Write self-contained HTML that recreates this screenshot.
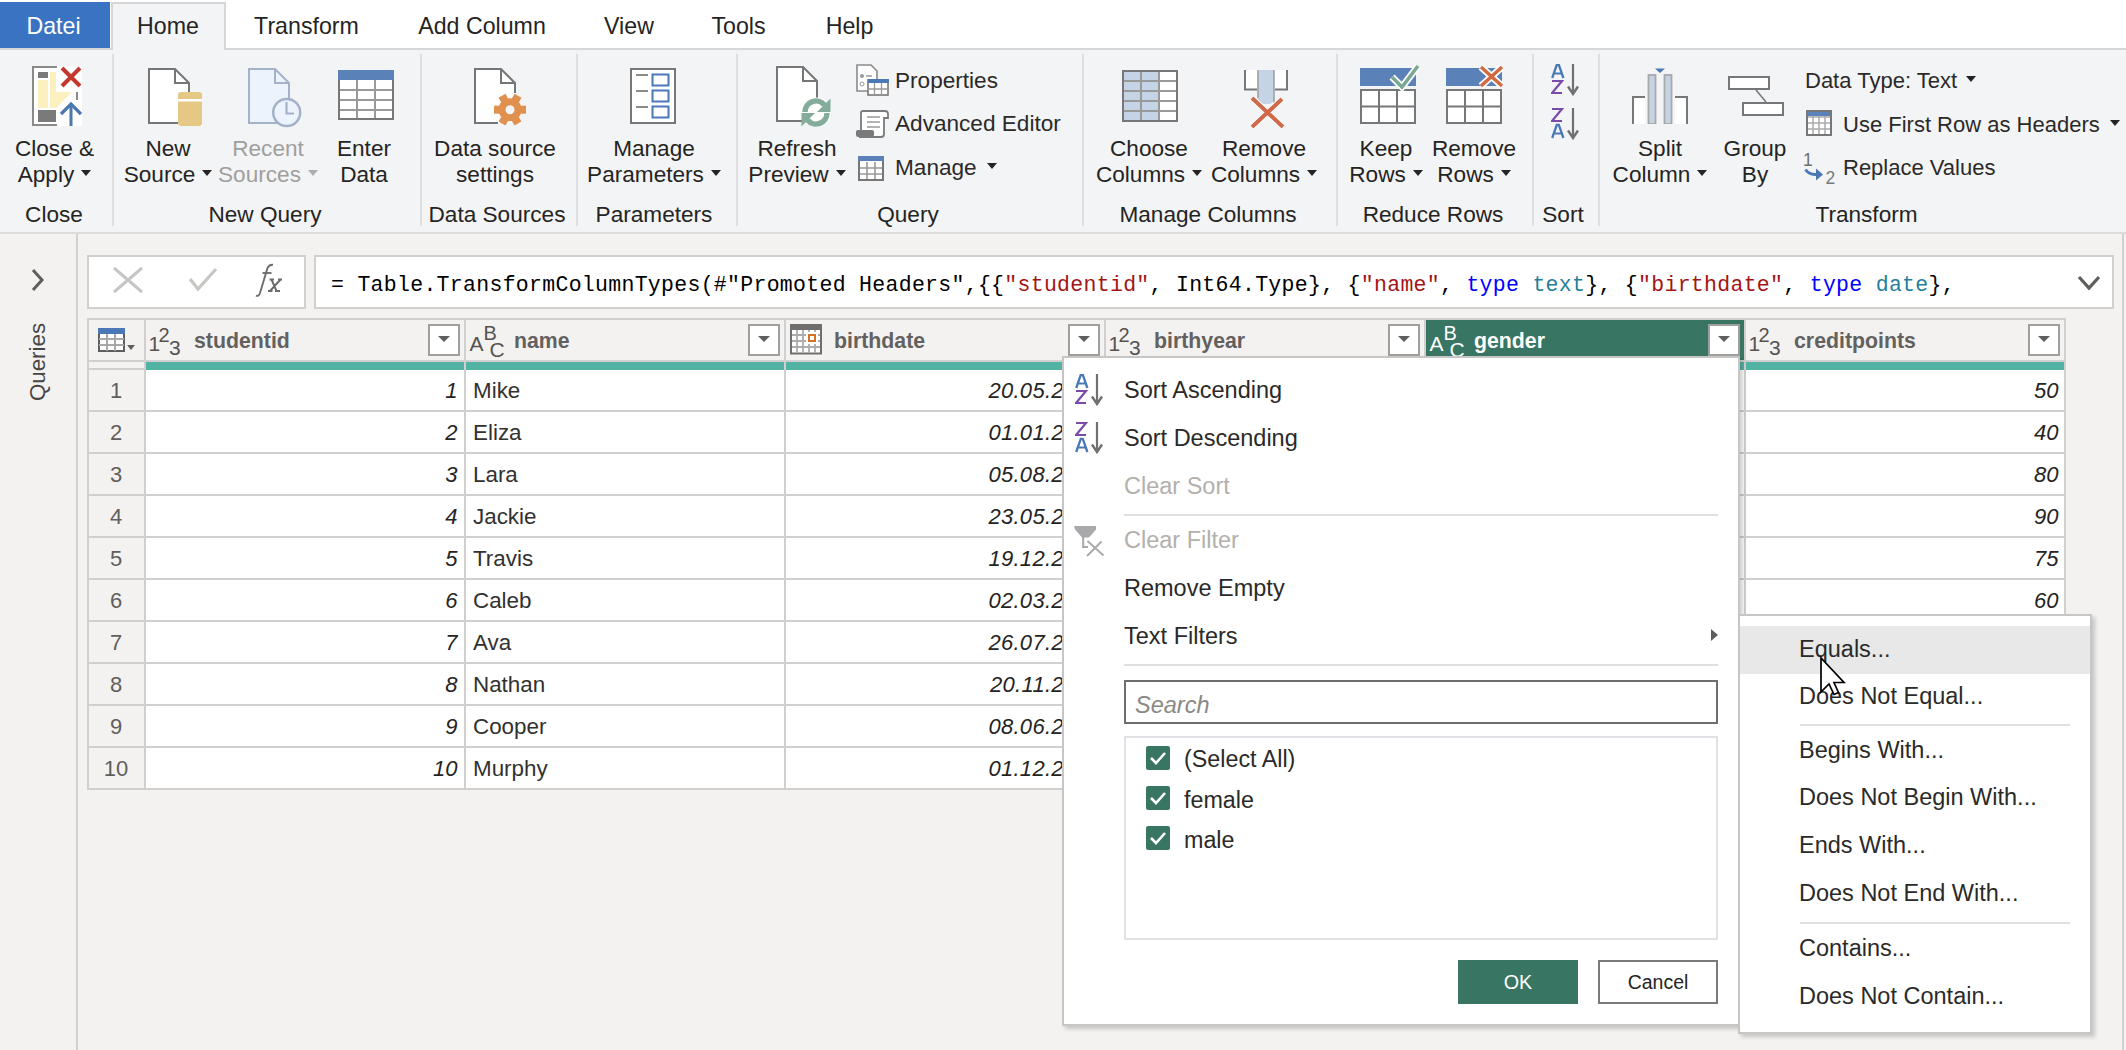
<!DOCTYPE html><html><head><meta charset="utf-8"><style>
html,body{margin:0;padding:0;width:2126px;height:1050px;overflow:hidden;background:#f3f2f1}
body{position:relative;font-family:"Liberation Sans",sans-serif}
.t{position:absolute;white-space:nowrap;line-height:0;height:0}
.r{position:absolute;display:block}
.s{color:#a31515}.k{color:#0000ff}.y{color:#267f99}
</style></head><body>
<div class="r" style="left:0px;top:0px;width:2126px;height:1050px;background:#f3f2f1;"></div>
<div class="r" style="left:0px;top:0px;width:2126px;height:48px;background:#ffffff;"></div>
<div class="r" style="left:0px;top:48px;width:2126px;height:184px;background:#f3f4f6;"></div>
<div class="r" style="left:0px;top:48px;width:2126px;height:2px;background:#d6d6d6;"></div>
<div class="r" style="left:0px;top:232px;width:2126px;height:2px;background:#dcdcdc;"></div>
<div class="r" style="left:0px;top:2px;width:110px;height:46px;background:#3b73c3;"></div>
<div class="t" style="left:-446.5px;width:1000px;text-align:center;top:26.26px;font-size:23.2px;color:#ffffff;font-weight:normal;font-style:normal;font-family:'Liberation Sans', sans-serif;">Datei</div>
<div class="r" style="left:111px;top:2px;width:115px;height:48px;background:#f3f4f6;border:2px solid #d6d6d6;border-bottom:none;box-sizing:border-box"></div>
<div class="t" style="left:-332px;width:1000px;text-align:center;top:26.26px;font-size:23.2px;color:#252423;font-weight:normal;font-style:normal;font-family:'Liberation Sans', sans-serif;">Home</div>
<div class="t" style="left:-193.5px;width:1000px;text-align:center;top:26.26px;font-size:23.2px;color:#252423;font-weight:normal;font-style:normal;font-family:'Liberation Sans', sans-serif;">Transform</div>
<div class="t" style="left:-18px;width:1000px;text-align:center;top:26.26px;font-size:23.2px;color:#252423;font-weight:normal;font-style:normal;font-family:'Liberation Sans', sans-serif;">Add Column</div>
<div class="t" style="left:129px;width:1000px;text-align:center;top:26.26px;font-size:23.2px;color:#252423;font-weight:normal;font-style:normal;font-family:'Liberation Sans', sans-serif;">View</div>
<div class="t" style="left:238.5px;width:1000px;text-align:center;top:26.26px;font-size:23.2px;color:#252423;font-weight:normal;font-style:normal;font-family:'Liberation Sans', sans-serif;">Tools</div>
<div class="t" style="left:349.5px;width:1000px;text-align:center;top:26.26px;font-size:23.2px;color:#252423;font-weight:normal;font-style:normal;font-family:'Liberation Sans', sans-serif;">Help</div>
<div class="r" style="left:111.6px;top:54px;width:2px;height:172px;background:#dedede;"></div>
<div class="r" style="left:420px;top:54px;width:2px;height:172px;background:#dedede;"></div>
<div class="r" style="left:576px;top:54px;width:2px;height:172px;background:#dedede;"></div>
<div class="r" style="left:736px;top:54px;width:2px;height:172px;background:#dedede;"></div>
<div class="r" style="left:1082px;top:54px;width:2px;height:172px;background:#dedede;"></div>
<div class="r" style="left:1336px;top:54px;width:2px;height:172px;background:#dedede;"></div>
<div class="r" style="left:1532px;top:54px;width:2px;height:172px;background:#dedede;"></div>
<div class="r" style="left:1597.7px;top:54px;width:2px;height:172px;background:#dedede;"></div>
<div class="t" style="left:-445.5px;width:1000px;text-align:center;top:148.97px;font-size:22.6px;color:#252423;font-weight:normal;font-style:normal;font-family:'Liberation Sans', sans-serif;">Close &amp;</div>
<div class="t" style="left:-445.5px;width:1000px;text-align:center;top:174.77px;font-size:22.6px;color:#252423;font-weight:normal;font-style:normal;font-family:'Liberation Sans', sans-serif;">Apply<span style="display:inline-block;width:17px;height:0;vertical-align:baseline;position:relative"><span style="position:absolute;left:7px;top:-11.5px;width:0;height:0;border-left:5px solid transparent;border-right:5px solid transparent;border-top:6px solid #252423"></span></span></div>
<div class="t" style="left:-446px;width:1000px;text-align:center;top:214.97px;font-size:22.6px;color:#252423;font-weight:normal;font-style:normal;font-family:'Liberation Sans', sans-serif;">Close</div>
<div class="t" style="left:-332px;width:1000px;text-align:center;top:148.97px;font-size:22.6px;color:#252423;font-weight:normal;font-style:normal;font-family:'Liberation Sans', sans-serif;">New</div>
<div class="t" style="left:-332px;width:1000px;text-align:center;top:174.77px;font-size:22.6px;color:#252423;font-weight:normal;font-style:normal;font-family:'Liberation Sans', sans-serif;">Source<span style="display:inline-block;width:17px;height:0;vertical-align:baseline;position:relative"><span style="position:absolute;left:7px;top:-11.5px;width:0;height:0;border-left:5px solid transparent;border-right:5px solid transparent;border-top:6px solid #252423"></span></span></div>
<div class="t" style="left:-232px;width:1000px;text-align:center;top:148.97px;font-size:22.6px;color:#a19f9d;font-weight:normal;font-style:normal;font-family:'Liberation Sans', sans-serif;">Recent</div>
<div class="t" style="left:-232px;width:1000px;text-align:center;top:174.77px;font-size:22.6px;color:#a19f9d;font-weight:normal;font-style:normal;font-family:'Liberation Sans', sans-serif;">Sources<span style="display:inline-block;width:17px;height:0;vertical-align:baseline;position:relative"><span style="position:absolute;left:7px;top:-11.5px;width:0;height:0;border-left:5px solid transparent;border-right:5px solid transparent;border-top:6px solid #b0aeac"></span></span></div>
<div class="t" style="left:-136px;width:1000px;text-align:center;top:148.97px;font-size:22.6px;color:#252423;font-weight:normal;font-style:normal;font-family:'Liberation Sans', sans-serif;">Enter</div>
<div class="t" style="left:-136px;width:1000px;text-align:center;top:174.77px;font-size:22.6px;color:#252423;font-weight:normal;font-style:normal;font-family:'Liberation Sans', sans-serif;">Data</div>
<div class="t" style="left:-235px;width:1000px;text-align:center;top:214.97px;font-size:22.6px;color:#252423;font-weight:normal;font-style:normal;font-family:'Liberation Sans', sans-serif;">New Query</div>
<div class="t" style="left:-5px;width:1000px;text-align:center;top:148.97px;font-size:22.6px;color:#252423;font-weight:normal;font-style:normal;font-family:'Liberation Sans', sans-serif;">Data source</div>
<div class="t" style="left:-5px;width:1000px;text-align:center;top:174.77px;font-size:22.6px;color:#252423;font-weight:normal;font-style:normal;font-family:'Liberation Sans', sans-serif;">settings</div>
<div class="t" style="left:-3px;width:1000px;text-align:center;top:214.97px;font-size:22.6px;color:#252423;font-weight:normal;font-style:normal;font-family:'Liberation Sans', sans-serif;">Data Sources</div>
<div class="t" style="left:154px;width:1000px;text-align:center;top:148.97px;font-size:22.6px;color:#252423;font-weight:normal;font-style:normal;font-family:'Liberation Sans', sans-serif;">Manage</div>
<div class="t" style="left:154px;width:1000px;text-align:center;top:174.77px;font-size:22.6px;color:#252423;font-weight:normal;font-style:normal;font-family:'Liberation Sans', sans-serif;">Parameters<span style="display:inline-block;width:17px;height:0;vertical-align:baseline;position:relative"><span style="position:absolute;left:7px;top:-11.5px;width:0;height:0;border-left:5px solid transparent;border-right:5px solid transparent;border-top:6px solid #252423"></span></span></div>
<div class="t" style="left:154px;width:1000px;text-align:center;top:214.97px;font-size:22.6px;color:#252423;font-weight:normal;font-style:normal;font-family:'Liberation Sans', sans-serif;">Parameters</div>
<div class="t" style="left:297px;width:1000px;text-align:center;top:148.97px;font-size:22.6px;color:#252423;font-weight:normal;font-style:normal;font-family:'Liberation Sans', sans-serif;">Refresh</div>
<div class="t" style="left:297px;width:1000px;text-align:center;top:174.77px;font-size:22.6px;color:#252423;font-weight:normal;font-style:normal;font-family:'Liberation Sans', sans-serif;">Preview<span style="display:inline-block;width:17px;height:0;vertical-align:baseline;position:relative"><span style="position:absolute;left:7px;top:-11.5px;width:0;height:0;border-left:5px solid transparent;border-right:5px solid transparent;border-top:6px solid #252423"></span></span></div>
<div class="t" style="left:895px;top:80.97px;font-size:22.6px;color:#2b2a29;font-weight:normal;font-style:normal;font-family:'Liberation Sans', sans-serif;">Properties</div>
<div class="t" style="left:895px;top:124.47px;font-size:22.6px;color:#2b2a29;font-weight:normal;font-style:normal;font-family:'Liberation Sans', sans-serif;">Advanced Editor</div>
<div class="t" style="left:895px;top:167.97px;font-size:22.6px;color:#2b2a29;font-weight:normal;font-style:normal;font-family:'Liberation Sans', sans-serif;">Manage<span style="display:inline-block;width:17px;height:0;vertical-align:baseline;position:relative"><span style="position:absolute;left:10px;top:-11.5px;width:0;height:0;border-left:5px solid transparent;border-right:5px solid transparent;border-top:6px solid #252423"></span></span></div>
<div class="t" style="left:408px;width:1000px;text-align:center;top:214.97px;font-size:22.6px;color:#252423;font-weight:normal;font-style:normal;font-family:'Liberation Sans', sans-serif;">Query</div>
<div class="t" style="left:649px;width:1000px;text-align:center;top:148.97px;font-size:22.6px;color:#252423;font-weight:normal;font-style:normal;font-family:'Liberation Sans', sans-serif;">Choose</div>
<div class="t" style="left:649px;width:1000px;text-align:center;top:174.77px;font-size:22.6px;color:#252423;font-weight:normal;font-style:normal;font-family:'Liberation Sans', sans-serif;">Columns<span style="display:inline-block;width:17px;height:0;vertical-align:baseline;position:relative"><span style="position:absolute;left:7px;top:-11.5px;width:0;height:0;border-left:5px solid transparent;border-right:5px solid transparent;border-top:6px solid #252423"></span></span></div>
<div class="t" style="left:764px;width:1000px;text-align:center;top:148.97px;font-size:22.6px;color:#252423;font-weight:normal;font-style:normal;font-family:'Liberation Sans', sans-serif;">Remove</div>
<div class="t" style="left:764px;width:1000px;text-align:center;top:174.77px;font-size:22.6px;color:#252423;font-weight:normal;font-style:normal;font-family:'Liberation Sans', sans-serif;">Columns<span style="display:inline-block;width:17px;height:0;vertical-align:baseline;position:relative"><span style="position:absolute;left:7px;top:-11.5px;width:0;height:0;border-left:5px solid transparent;border-right:5px solid transparent;border-top:6px solid #252423"></span></span></div>
<div class="t" style="left:708px;width:1000px;text-align:center;top:214.97px;font-size:22.6px;color:#252423;font-weight:normal;font-style:normal;font-family:'Liberation Sans', sans-serif;">Manage Columns</div>
<div class="t" style="left:886px;width:1000px;text-align:center;top:148.97px;font-size:22.6px;color:#252423;font-weight:normal;font-style:normal;font-family:'Liberation Sans', sans-serif;">Keep</div>
<div class="t" style="left:886px;width:1000px;text-align:center;top:174.77px;font-size:22.6px;color:#252423;font-weight:normal;font-style:normal;font-family:'Liberation Sans', sans-serif;">Rows<span style="display:inline-block;width:17px;height:0;vertical-align:baseline;position:relative"><span style="position:absolute;left:7px;top:-11.5px;width:0;height:0;border-left:5px solid transparent;border-right:5px solid transparent;border-top:6px solid #252423"></span></span></div>
<div class="t" style="left:974px;width:1000px;text-align:center;top:148.97px;font-size:22.6px;color:#252423;font-weight:normal;font-style:normal;font-family:'Liberation Sans', sans-serif;">Remove</div>
<div class="t" style="left:974px;width:1000px;text-align:center;top:174.77px;font-size:22.6px;color:#252423;font-weight:normal;font-style:normal;font-family:'Liberation Sans', sans-serif;">Rows<span style="display:inline-block;width:17px;height:0;vertical-align:baseline;position:relative"><span style="position:absolute;left:7px;top:-11.5px;width:0;height:0;border-left:5px solid transparent;border-right:5px solid transparent;border-top:6px solid #252423"></span></span></div>
<div class="t" style="left:933px;width:1000px;text-align:center;top:214.97px;font-size:22.6px;color:#252423;font-weight:normal;font-style:normal;font-family:'Liberation Sans', sans-serif;">Reduce Rows</div>
<div class="t" style="left:1063px;width:1000px;text-align:center;top:214.97px;font-size:22.6px;color:#252423;font-weight:normal;font-style:normal;font-family:'Liberation Sans', sans-serif;">Sort</div>
<div class="t" style="left:1160px;width:1000px;text-align:center;top:148.97px;font-size:22.6px;color:#252423;font-weight:normal;font-style:normal;font-family:'Liberation Sans', sans-serif;">Split</div>
<div class="t" style="left:1160px;width:1000px;text-align:center;top:174.77px;font-size:22.6px;color:#252423;font-weight:normal;font-style:normal;font-family:'Liberation Sans', sans-serif;">Column<span style="display:inline-block;width:17px;height:0;vertical-align:baseline;position:relative"><span style="position:absolute;left:7px;top:-11.5px;width:0;height:0;border-left:5px solid transparent;border-right:5px solid transparent;border-top:6px solid #252423"></span></span></div>
<div class="t" style="left:1255px;width:1000px;text-align:center;top:148.97px;font-size:22.6px;color:#252423;font-weight:normal;font-style:normal;font-family:'Liberation Sans', sans-serif;">Group</div>
<div class="t" style="left:1255px;width:1000px;text-align:center;top:174.77px;font-size:22.6px;color:#252423;font-weight:normal;font-style:normal;font-family:'Liberation Sans', sans-serif;">By</div>
<div class="t" style="left:1805px;top:80.78px;font-size:22px;color:#2b2a29;font-weight:normal;font-style:normal;font-family:'Liberation Sans', sans-serif;">Data Type: Text<span style="display:inline-block;width:17px;height:0;vertical-align:baseline;position:relative"><span style="position:absolute;left:9px;top:-11.5px;width:0;height:0;border-left:5px solid transparent;border-right:5px solid transparent;border-top:6px solid #252423"></span></span></div>
<div class="t" style="left:1843px;top:124.78px;font-size:22px;color:#2b2a29;font-weight:normal;font-style:normal;font-family:'Liberation Sans', sans-serif;">Use First Row as Headers<span style="display:inline-block;width:17px;height:0;vertical-align:baseline;position:relative"><span style="position:absolute;left:10px;top:-11.5px;width:0;height:0;border-left:5px solid transparent;border-right:5px solid transparent;border-top:6px solid #252423"></span></span></div>
<div class="t" style="left:1843px;top:168.18px;font-size:22px;color:#2b2a29;font-weight:normal;font-style:normal;font-family:'Liberation Sans', sans-serif;">Replace Values</div>
<div class="t" style="left:1366.5px;width:1000px;text-align:center;top:214.97px;font-size:22.6px;color:#252423;font-weight:normal;font-style:normal;font-family:'Liberation Sans', sans-serif;">Transform</div>
<svg class="r" style="left:32px;top:66px" width="50" height="60" viewBox="0 0 50 60"><rect x="0" y="0" width="50" height="60" fill="#fff"/><path d="M25 1H1V59H25" fill="none" stroke="#8a8a8a" stroke-width="2"/><rect x="6" y="6" width="10" height="6" fill="#7a7a7a"/><rect x="6" y="14" width="10" height="28" fill="#fdf0bf"/><path d="M18 6H24V26H40L24 42H18Z" fill="#fdf0bf"/><rect x="6" y="44" width="18" height="12" fill="#7a7a7a"/><path d="M30 2L48 20M48 2L30 20" stroke="#c4392f" stroke-width="4"/><rect x="44" y="26" width="2" height="8" fill="#8a8a8a"/><path d="M29 48L39 38L49 48" fill="none" stroke="#4a78b0" stroke-width="3.2"/><rect x="37.5" y="39" width="3" height="21" fill="#4a78b0"/></svg>
<svg class="r" style="left:148px;top:68px" width="56" height="60" viewBox="0 0 56 60"><path d="M1 1H27L41 15V55H1Z" fill="#fff" stroke="#767676" stroke-width="2"/><path d="M27 1V15H41" fill="none" stroke="#767676" stroke-width="2"/><path d="M30 26h24v32h-24z" fill="#fff"/><rect x="30" y="24" width="24" height="34" rx="3" fill="#e5c884"/><rect x="30" y="31" width="24" height="2.5" fill="#fff"/></svg>
<svg class="r" style="left:248px;top:68px" width="56" height="60" viewBox="0 0 56 60"><path d="M1 1H27L41 15V55H1Z" fill="#edf3fc" stroke="#a4b2c9" stroke-width="2"/><path d="M27 1V15H41" fill="none" stroke="#a4b2c9" stroke-width="2"/><circle cx="38.7" cy="44.5" r="13.5" fill="#edf3fc" stroke="#a4b2c9" stroke-width="2.5"/><path d="M38.5 34V45.5H46" fill="none" stroke="#a4b2c9" stroke-width="2.2"/></svg>
<svg class="r" style="left:338px;top:70px" width="56" height="50" viewBox="0 0 56 50"><rect x="1" y="1" width="54" height="48" fill="#fff" stroke="#777" stroke-width="2"/><rect x="0" y="0" width="56" height="10" fill="#5a82b8"/><path d="M19 10V49M37 10V49M1 20H55M1 30H55M1 40H55" stroke="#999" stroke-width="2"/><rect x="1" y="1" width="54" height="48" fill="none" stroke="#777" stroke-width="2"/><rect x="0" y="0" width="56" height="10" fill="#5a82b8"/></svg>
<svg class="r" style="left:474px;top:68px" width="60" height="60" viewBox="0 0 60 60"><path d="M1 1H27L41 15V55H1Z" fill="#fff"/><path d="M24 55H1V1H27L41 15V25" fill="none" stroke="#767676" stroke-width="2"/><path d="M27 1V15H41" fill="none" stroke="#767676" stroke-width="2"/><g transform="translate(36 41.7)" fill="#e0914f"><circle r="11.5"/><rect x="-4" y="-16" width="8" height="7" transform="rotate(90)"/><rect x="-4" y="-16" width="8" height="7" transform="rotate(150)"/><rect x="-4" y="-16" width="8" height="7" transform="rotate(210)"/><rect x="-4" y="-16" width="8" height="7" transform="rotate(270)"/><rect x="-4" y="-16" width="8" height="7" transform="rotate(330)"/><rect x="-4" y="-16" width="8" height="7" transform="rotate(390)"/><circle r="4.5" fill="#f3f4f6"/></g></svg>
<svg class="r" style="left:630px;top:68px" width="46" height="56" viewBox="0 0 46 56"><rect x="1" y="1" width="44" height="54" fill="#fff" stroke="#777" stroke-width="2"/><path d="M6 7H18M6 23H18M6 39H18" stroke="#8a8a8a" stroke-width="2"/><rect x="22.5" y="6.5" width="16" height="11" fill="none" stroke="#4a78b5" stroke-width="2"/><rect x="22.5" y="22.5" width="16" height="11" fill="none" stroke="#4a78b5" stroke-width="2"/><rect x="22.5" y="38.5" width="16" height="11" fill="none" stroke="#4a78b5" stroke-width="2"/></svg>
<svg class="r" style="left:776px;top:66px" width="58" height="64" viewBox="0 0 58 64"><path d="M1 1H27L41 15V55H1Z" fill="#fff" stroke="#767676" stroke-width="2"/><path d="M27 1V15H41" fill="none" stroke="#767676" stroke-width="2"/><circle cx="40" cy="46.5" r="15" fill="#fff"/><path d="M29 46A11 11 0 0 1 48.5 39" fill="none" stroke="#84ac9b" stroke-width="5.5"/><path d="M54.5 32.5V46H41Z" fill="#84ac9b"/><path d="M51 47A11 11 0 0 1 31.5 54" fill="none" stroke="#84ac9b" stroke-width="5.5"/><path d="M25.5 60.5V47H39Z" fill="#84ac9b"/></svg>
<svg class="r" style="left:856px;top:64px" width="33" height="32" viewBox="0 0 33 32"><path d="M1 1H15L21 7V27H1Z" fill="#fff" stroke="#8a8a8a" stroke-width="1.6"/><circle cx="6" cy="12" r="2" fill="#999"/><circle cx="6" cy="20" r="2" fill="none" stroke="#999" stroke-width="1"/><path d="M10 12H16" stroke="#999" stroke-width="1.5"/><rect x="12" y="16" width="20" height="15" fill="#fff" stroke="#777" stroke-width="1.6"/><rect x="12" y="15" width="21" height="4" fill="#4a78b5"/><path d="M18.5 19V31M25.5 19V31M12 25H32" stroke="#999" stroke-width="1.3"/></svg>
<svg class="r" style="left:856px;top:110px" width="33" height="28" viewBox="0 0 33 28"><path d="M5 26V3Q5 1 7 1H29Q32 1 32 4V8H28V24Q28 27 25 27H3" fill="#fff" stroke="#7a7a7a" stroke-width="1.8"/><rect x="0" y="20" width="18" height="7" rx="2" fill="#7a7a7a"/><path d="M11 7H24M11 12H24M11 17H24" stroke="#999" stroke-width="1.6"/></svg>
<svg class="r" style="left:858px;top:156px" width="26" height="25" viewBox="0 0 26 25"><rect x="1" y="1" width="24" height="23" fill="#fff" stroke="#777" stroke-width="2"/><path d="M9 6V24M17 6V24M1 12H25M1 18H25" stroke="#999" stroke-width="1.6"/><rect x="1" y="1" width="24" height="23" fill="none" stroke="#777" stroke-width="2"/><rect x="0" y="0" width="26" height="5" fill="#5a82b8"/></svg>
<svg class="r" style="left:1122px;top:70px" width="56" height="52" viewBox="0 0 56 52"><rect x="1" y="1" width="54" height="50" fill="#fff"/><rect x="1" y="1" width="36" height="50" fill="#c5d3e6"/><path d="M19 1V51M37 1V51M1 11H55M1 21H55M1 31H55M1 41H55" stroke="#999" stroke-width="2"/><rect x="1" y="1" width="54" height="50" fill="none" stroke="#777" stroke-width="2"/></svg>
<svg class="r" style="left:1243px;top:70px" width="46" height="58" viewBox="0 0 46 58"><rect x="1" y="0" width="44" height="20" fill="#fff"/><path d="M2 0V19.5H14M44 0V19.5H32" fill="none" stroke="#777" stroke-width="2"/><path d="M15 0H31V31L27 34H19L15 31Z" fill="#c5d3e6"/><path d="M15 0V28M31 0V33" stroke="#a0a0a0" stroke-width="1.6"/><path d="M9 28L40 57M39 29L9 57" stroke="#fff" stroke-width="6"/><path d="M9 28L40 57M39 29L9 57" stroke="#d0694a" stroke-width="4"/></svg>
<svg class="r" style="left:1360px;top:65px" width="60" height="60" viewBox="0 0 60 60"><rect x="1" y="25" width="54" height="33" fill="#fff" stroke="#777" stroke-width="2"/><path d="M19 25V58M37 25V58M1 41.5H55" stroke="#777" stroke-width="2"/><rect x="0" y="3" width="56" height="18" fill="#5a82b8"/><path d="M32 12L42 22L58 1" fill="none" stroke="#fff" stroke-width="7"/><path d="M32 12L42 22L58 1" fill="none" stroke="#7aa893" stroke-width="3.5"/></svg>
<svg class="r" style="left:1446px;top:65px" width="60" height="60" viewBox="0 0 60 60"><rect x="1" y="25" width="54" height="33" fill="#fff" stroke="#777" stroke-width="2"/><path d="M19 25V58M37 25V58M1 41.5H55" stroke="#777" stroke-width="2"/><rect x="0" y="3" width="56" height="18" fill="#5a82b8"/><path d="M35 2L56 21M56 2L35 21" stroke="#fff" stroke-width="7"/><path d="M35 2L56 21M56 2L35 21" stroke="#d2693f" stroke-width="3.5"/></svg>
<svg class="r" style="left:1551px;top:64px" width="30" height="32" viewBox="0 0 30 32"><path d="M1.2 14L5.8 0.8H7.8L12.4 14" fill="none" stroke="#4a78b5" stroke-width="2.3"/><path d="M3.5 9.5H10" stroke="#4a78b5" stroke-width="2"/><path d="M1 17H11L1 29H11" fill="none" stroke="#7b4ba8" stroke-width="2.2"/><path d="M22 0V29" stroke="#707070" stroke-width="2.2"/><path d="M17 22.5L22 30L27 22.5" fill="none" stroke="#707070" stroke-width="2.4"/></svg>
<svg class="r" style="left:1551px;top:108px" width="30" height="32" viewBox="0 0 30 32"><path d="M1 1H11L1 13H11" fill="none" stroke="#7b4ba8" stroke-width="2.2"/><path d="M1.2 30L5.8 16.8H7.8L12.4 30" fill="none" stroke="#4a78b5" stroke-width="2.3"/><path d="M3.5 25.5H10" stroke="#4a78b5" stroke-width="2"/><path d="M22 0V29" stroke="#707070" stroke-width="2.2"/><path d="M17 22.5L22 30L27 22.5" fill="none" stroke="#707070" stroke-width="2.4"/></svg>
<svg class="r" style="left:1632px;top:68px" width="56" height="56" viewBox="0 0 56 56"><path d="M1 56V29H13M43 29H55V56" fill="none" stroke="#777" stroke-width="2"/><rect x="2" y="30" width="11" height="26" fill="#fff"/><rect x="43" y="30" width="11" height="26" fill="#fff"/><rect x="16.5" y="7" width="7" height="49" fill="#c5d3e6" stroke="#a8a8a8" stroke-width="1.8"/><rect x="32.5" y="7" width="7" height="49" fill="#c5d3e6" stroke="#a8a8a8" stroke-width="1.8"/><path d="M23 0.5H33L28 5Z" fill="#4a78b5"/></svg>
<svg class="r" style="left:1728px;top:76px" width="56" height="40" viewBox="0 0 56 40"><rect x="1" y="1" width="40" height="12" fill="#fff" stroke="#777" stroke-width="2"/><rect x="15" y="27" width="40" height="12" fill="#fff" stroke="#777" stroke-width="2"/><path d="M28 14L38 26" stroke="#777" stroke-width="1.5"/></svg>
<svg class="r" style="left:1806px;top:110px" width="26" height="26" viewBox="0 0 26 26"><rect x="1" y="1" width="24" height="24" fill="#fff" stroke="#777" stroke-width="2"/><path d="M7 1V25M13 1V25M19 1V25M1 7H25M1 13H25M1 19H25" stroke="#aaa" stroke-width="1.5"/><rect x="1" y="1" width="24" height="24" fill="none" stroke="#777" stroke-width="2"/><rect x="2" y="2" width="22" height="4" fill="#5a82b8"/></svg>
<svg class="r" style="left:1803px;top:150px" width="36" height="36" viewBox="0 0 36 36"><text x="0" y="15.5" font-family="Liberation Sans" font-size="17.5" fill="#6e6e6e">1</text><path d="M2.5 19.5Q6 24.5 12 24.5H14" fill="none" stroke="#4a78b5" stroke-width="3"/><path d="M13 18.5L20 24.5L13 30.5Z" fill="#4a78b5"/><text x="22.5" y="34" font-family="Liberation Sans" font-size="17.5" fill="#7a7a7a">2</text></svg>
<div class="r" style="left:76px;top:234px;width:2px;height:816px;background:#d2d0ce;"></div>
<div class="r" style="left:2122px;top:234px;width:2px;height:816px;background:#d2d0ce;"></div>
<svg class="r" style="left:30px;top:268px" width="16" height="24" viewBox="0 0 16 24"><path d="M3 2L12 12L3 22" fill="none" stroke="#605e5c" stroke-width="3"/></svg>
<div style="position:absolute;left:-12px;top:349px;width:100px;height:26px;line-height:26px;text-align:center;font-size:22.3px;color:#484644;font-family:'Liberation Sans', sans-serif;transform:rotate(-90deg);transform-origin:50px 13px;white-space:nowrap">Queries</div>
<div class="r" style="left:87px;top:255px;width:219px;height:54px;background:#ffffff;border:2px solid #d2d0ce;box-sizing:border-box"></div>
<div class="r" style="left:314px;top:255px;width:1800px;height:54px;background:#ffffff;border:2px solid #d2d0ce;box-sizing:border-box"></div>
<svg class="r" style="left:112px;top:266px" width="32" height="28" viewBox="0 0 32 28"><path d="M2 2L30 26M30 2L2 26" stroke="#c8c6c4" stroke-width="3"/></svg>
<svg class="r" style="left:188px;top:266px" width="30" height="26" viewBox="0 0 30 26"><path d="M2 13L10 23L28 3" fill="none" stroke="#c8c6c4" stroke-width="3.2"/></svg>
<svg class="r" style="left:252px;top:262px" width="34" height="36" viewBox="0 0 34 36"><g fill="none" stroke="#6e6c6a" stroke-width="1.9"><path d="M4 33.5Q6.5 35 8 31L15.5 6Q17 2.5 21 2.8"/><path d="M10.5 11H19.5"/><path d="M19.5 17.5L24.5 29M28.5 17.5L18 29"/><path d="M17.5 17.5H22M26 17.5H30M16 29H20.5M23 29H28"/></g></svg>
<svg class="r" style="left:2077px;top:275px" width="24" height="16" viewBox="0 0 24 16"><path d="M2 2L12 13L22 2" fill="none" stroke="#605e5c" stroke-width="3.2"/></svg>
<div class="t" style="left:331px;top:284.57px;font-size:21.5px;color:#000000;font-weight:normal;font-style:normal;font-family:'Liberation Mono', monospace;letter-spacing:0.3px;">= Table.TransformColumnTypes(#"Promoted Headers",{{<span class=s>"studentid"</span>, Int64.Type}, {<span class=s>"name"</span>, <span class=k>type</span> <span class=y>text</span>}, {<span class=s>"birthdate"</span>, <span class=k>type</span> <span class=y>date</span>},</div>
<div class="r" style="left:87px;top:318px;width:1979px;height:472px;background:#ffffff;"></div>
<div class="r" style="left:87px;top:318px;width:1979px;height:2px;background:#d2d0ce;"></div>
<div class="r" style="left:87px;top:320px;width:1978px;height:40px;background:#f3f2f1;"></div>
<div class="r" style="left:87px;top:320px;width:57px;height:470px;background:#f3f2f1;"></div>
<div class="r" style="left:87px;top:360px;width:1979px;height:2px;background:#d2d0ce;"></div>
<div class="r" style="left:146px;top:362px;width:1918px;height:8px;background:#52b3a5;"></div>
<div class="r" style="left:87px;top:368px;width:57px;height:2px;background:#d2d0ce;"></div>
<div class="r" style="left:87px;top:410px;width:1979px;height:2px;background:#d2d0ce;"></div>
<div class="r" style="left:87px;top:452px;width:1979px;height:2px;background:#d2d0ce;"></div>
<div class="r" style="left:87px;top:494px;width:1979px;height:2px;background:#d2d0ce;"></div>
<div class="r" style="left:87px;top:536px;width:1979px;height:2px;background:#d2d0ce;"></div>
<div class="r" style="left:87px;top:578px;width:1979px;height:2px;background:#d2d0ce;"></div>
<div class="r" style="left:87px;top:620px;width:1979px;height:2px;background:#d2d0ce;"></div>
<div class="r" style="left:87px;top:662px;width:1979px;height:2px;background:#d2d0ce;"></div>
<div class="r" style="left:87px;top:704px;width:1979px;height:2px;background:#d2d0ce;"></div>
<div class="r" style="left:87px;top:746px;width:1979px;height:2px;background:#d2d0ce;"></div>
<div class="r" style="left:87px;top:788px;width:1979px;height:2px;background:#d2d0ce;"></div>
<div class="r" style="left:87px;top:318px;width:2px;height:472px;background:#d2d0ce;"></div>
<div class="r" style="left:144px;top:318px;width:2px;height:472px;background:#d2d0ce;"></div>
<div class="r" style="left:464px;top:318px;width:2px;height:472px;background:#d2d0ce;"></div>
<div class="r" style="left:784px;top:318px;width:2px;height:472px;background:#d2d0ce;"></div>
<div class="r" style="left:1104px;top:318px;width:2px;height:472px;background:#d2d0ce;"></div>
<div class="r" style="left:1424px;top:318px;width:2px;height:472px;background:#d2d0ce;"></div>
<div class="r" style="left:1744px;top:318px;width:2px;height:472px;background:#d2d0ce;"></div>
<div class="r" style="left:2064px;top:318px;width:2px;height:472px;background:#d2d0ce;"></div>
<svg class="r" style="left:98px;top:328px" width="40" height="24" viewBox="0 0 40 24"><rect x="1" y="1" width="25" height="22" fill="#fff" stroke="#605e5c" stroke-width="2"/><rect x="0" y="0" width="27" height="6" fill="#4a78b5"/><path d="M9 6V23M17 6V23M1 11H26M1 17H26" stroke="#a8a8a8" stroke-width="2"/><path d="M29 17H37L33 22Z" fill="#605e5c"/></svg>
<div class="t" style="left:148.5px;top:343.52px;font-size:21px;color:#55534f;font-weight:normal;font-style:normal;font-family:'Liberation Sans', sans-serif;">1</div>
<div class="t" style="left:158.5px;top:334.87px;font-size:20px;color:#55534f;font-weight:normal;font-style:normal;font-family:'Liberation Sans', sans-serif;">2</div>
<div class="t" style="left:169px;top:347.52px;font-size:21px;color:#55534f;font-weight:normal;font-style:normal;font-family:'Liberation Sans', sans-serif;">3</div>
<div class="t" style="left:194px;top:341.02px;font-size:21.3px;color:#63615f;font-weight:bold;font-style:normal;font-family:'Liberation Sans', sans-serif;">studentid</div>
<div class="r" style="left:428px;top:324px;width:32px;height:32px;background:#ffffff;border:2px solid #a19f9d;box-sizing:border-box"></div>
<svg class="r" style="left:438px;top:336px" width="12" height="6" viewBox="0 0 12 6"><path d="M0 0H12L6.0 6Z" fill="#605e5c"/></svg>
<div class="t" style="left:469.5px;top:343.52px;font-size:21px;color:#55534f;font-weight:normal;font-style:normal;font-family:'Liberation Sans', sans-serif;">A</div>
<div class="t" style="left:483.5px;top:333.37px;font-size:20px;color:#55534f;font-weight:normal;font-style:normal;font-family:'Liberation Sans', sans-serif;">B</div>
<div class="t" style="left:489.5px;top:349.52px;font-size:21px;color:#55534f;font-weight:normal;font-style:normal;font-family:'Liberation Sans', sans-serif;">C</div>
<div class="t" style="left:514px;top:341.02px;font-size:21.3px;color:#63615f;font-weight:bold;font-style:normal;font-family:'Liberation Sans', sans-serif;">name</div>
<div class="r" style="left:748px;top:324px;width:32px;height:32px;background:#ffffff;border:2px solid #a19f9d;box-sizing:border-box"></div>
<svg class="r" style="left:758px;top:336px" width="12" height="6" viewBox="0 0 12 6"><path d="M0 0H12L6.0 6Z" fill="#605e5c"/></svg>
<svg class="r" style="left:790px;top:324px" width="33" height="31" viewBox="0 0 33 31"><rect x="1" y="1" width="30" height="28.5" fill="#fff" stroke="#6e6e6e" stroke-width="2"/><rect x="0" y="0" width="32" height="6" fill="#6e6e6e"/><path d="M7 6V29M13 6V29M19 6V29M25 6V29M2 11H30M2 17H30M2 23H30" stroke="#acacac" stroke-width="1.8"/><rect x="16" y="8" width="12" height="12" fill="#fff"/><rect x="19" y="11" width="6" height="6" fill="#fff" stroke="#d8701f" stroke-width="2"/></svg>
<div class="t" style="left:834px;top:341.02px;font-size:21.3px;color:#63615f;font-weight:bold;font-style:normal;font-family:'Liberation Sans', sans-serif;">birthdate</div>
<div class="r" style="left:1068px;top:324px;width:32px;height:32px;background:#ffffff;border:2px solid #a19f9d;box-sizing:border-box"></div>
<svg class="r" style="left:1078px;top:336px" width="12" height="6" viewBox="0 0 12 6"><path d="M0 0H12L6.0 6Z" fill="#605e5c"/></svg>
<div class="t" style="left:1108.5px;top:343.52px;font-size:21px;color:#55534f;font-weight:normal;font-style:normal;font-family:'Liberation Sans', sans-serif;">1</div>
<div class="t" style="left:1118.5px;top:334.87px;font-size:20px;color:#55534f;font-weight:normal;font-style:normal;font-family:'Liberation Sans', sans-serif;">2</div>
<div class="t" style="left:1129px;top:347.52px;font-size:21px;color:#55534f;font-weight:normal;font-style:normal;font-family:'Liberation Sans', sans-serif;">3</div>
<div class="t" style="left:1154px;top:341.02px;font-size:21.3px;color:#63615f;font-weight:bold;font-style:normal;font-family:'Liberation Sans', sans-serif;">birthyear</div>
<div class="r" style="left:1388px;top:324px;width:32px;height:32px;background:#ffffff;border:2px solid #a19f9d;box-sizing:border-box"></div>
<svg class="r" style="left:1398px;top:336px" width="12" height="6" viewBox="0 0 12 6"><path d="M0 0H12L6.0 6Z" fill="#605e5c"/></svg>
<div class="r" style="left:1426px;top:320px;width:318px;height:40px;background:#387563;"></div>
<div class="t" style="left:1429.5px;top:343.52px;font-size:21px;color:#ffffff;font-weight:normal;font-style:normal;font-family:'Liberation Sans', sans-serif;">A</div>
<div class="t" style="left:1443.5px;top:333.37px;font-size:20px;color:#ffffff;font-weight:normal;font-style:normal;font-family:'Liberation Sans', sans-serif;">B</div>
<div class="t" style="left:1449.5px;top:349.52px;font-size:21px;color:#ffffff;font-weight:normal;font-style:normal;font-family:'Liberation Sans', sans-serif;">C</div>
<div class="t" style="left:1474px;top:341.02px;font-size:21.3px;color:#ffffff;font-weight:bold;font-style:normal;font-family:'Liberation Sans', sans-serif;">gender</div>
<div class="r" style="left:1708px;top:324px;width:32px;height:32px;background:#ffffff;border:2px solid #a19f9d;box-sizing:border-box"></div>
<svg class="r" style="left:1718px;top:336px" width="12" height="6" viewBox="0 0 12 6"><path d="M0 0H12L6.0 6Z" fill="#605e5c"/></svg>
<div class="t" style="left:1748.5px;top:343.52px;font-size:21px;color:#55534f;font-weight:normal;font-style:normal;font-family:'Liberation Sans', sans-serif;">1</div>
<div class="t" style="left:1758.5px;top:334.87px;font-size:20px;color:#55534f;font-weight:normal;font-style:normal;font-family:'Liberation Sans', sans-serif;">2</div>
<div class="t" style="left:1769px;top:347.52px;font-size:21px;color:#55534f;font-weight:normal;font-style:normal;font-family:'Liberation Sans', sans-serif;">3</div>
<div class="t" style="left:1794px;top:341.02px;font-size:21.3px;color:#63615f;font-weight:bold;font-style:normal;font-family:'Liberation Sans', sans-serif;">creditpoints</div>
<div class="r" style="left:2028px;top:324px;width:32px;height:32px;background:#ffffff;border:2px solid #a19f9d;box-sizing:border-box"></div>
<svg class="r" style="left:2038px;top:336px" width="12" height="6" viewBox="0 0 12 6"><path d="M0 0H12L6.0 6Z" fill="#605e5c"/></svg>
<div class="t" style="left:-384px;width:1000px;text-align:center;top:391.18px;font-size:22px;color:#605e5c;font-weight:normal;font-style:normal;font-family:'Liberation Sans', sans-serif;">1</div>
<div class="t" style="left:-542.5px;width:1000px;text-align:right;top:391.18px;font-size:22px;color:#252423;font-weight:normal;font-style:italic;font-family:'Liberation Sans', sans-serif;">1</div>
<div class="t" style="left:473px;top:391.04px;font-size:22.4px;color:#323130;font-weight:normal;font-style:normal;font-family:'Liberation Sans', sans-serif;">Mike</div>
<div class="t" style="left:101.5px;width:1000px;text-align:right;top:391.18px;font-size:22px;color:#252423;font-weight:normal;font-style:italic;font-family:'Liberation Sans', sans-serif;letter-spacing:0.3px;">20.05.2000</div>
<div class="t" style="left:1058.5px;width:1000px;text-align:right;top:391.18px;font-size:22px;color:#252423;font-weight:normal;font-style:italic;font-family:'Liberation Sans', sans-serif;">50</div>
<div class="t" style="left:-384px;width:1000px;text-align:center;top:433.18px;font-size:22px;color:#605e5c;font-weight:normal;font-style:normal;font-family:'Liberation Sans', sans-serif;">2</div>
<div class="t" style="left:-542.5px;width:1000px;text-align:right;top:433.18px;font-size:22px;color:#252423;font-weight:normal;font-style:italic;font-family:'Liberation Sans', sans-serif;">2</div>
<div class="t" style="left:473px;top:433.04px;font-size:22.4px;color:#323130;font-weight:normal;font-style:normal;font-family:'Liberation Sans', sans-serif;">Eliza</div>
<div class="t" style="left:101.5px;width:1000px;text-align:right;top:433.18px;font-size:22px;color:#252423;font-weight:normal;font-style:italic;font-family:'Liberation Sans', sans-serif;letter-spacing:0.3px;">01.01.2001</div>
<div class="t" style="left:1058.5px;width:1000px;text-align:right;top:433.18px;font-size:22px;color:#252423;font-weight:normal;font-style:italic;font-family:'Liberation Sans', sans-serif;">40</div>
<div class="t" style="left:-384px;width:1000px;text-align:center;top:475.18px;font-size:22px;color:#605e5c;font-weight:normal;font-style:normal;font-family:'Liberation Sans', sans-serif;">3</div>
<div class="t" style="left:-542.5px;width:1000px;text-align:right;top:475.18px;font-size:22px;color:#252423;font-weight:normal;font-style:italic;font-family:'Liberation Sans', sans-serif;">3</div>
<div class="t" style="left:473px;top:475.04px;font-size:22.4px;color:#323130;font-weight:normal;font-style:normal;font-family:'Liberation Sans', sans-serif;">Lara</div>
<div class="t" style="left:101.5px;width:1000px;text-align:right;top:475.18px;font-size:22px;color:#252423;font-weight:normal;font-style:italic;font-family:'Liberation Sans', sans-serif;letter-spacing:0.3px;">05.08.2000</div>
<div class="t" style="left:1058.5px;width:1000px;text-align:right;top:475.18px;font-size:22px;color:#252423;font-weight:normal;font-style:italic;font-family:'Liberation Sans', sans-serif;">80</div>
<div class="t" style="left:-384px;width:1000px;text-align:center;top:517.18px;font-size:22px;color:#605e5c;font-weight:normal;font-style:normal;font-family:'Liberation Sans', sans-serif;">4</div>
<div class="t" style="left:-542.5px;width:1000px;text-align:right;top:517.18px;font-size:22px;color:#252423;font-weight:normal;font-style:italic;font-family:'Liberation Sans', sans-serif;">4</div>
<div class="t" style="left:473px;top:517.04px;font-size:22.4px;color:#323130;font-weight:normal;font-style:normal;font-family:'Liberation Sans', sans-serif;">Jackie</div>
<div class="t" style="left:101.5px;width:1000px;text-align:right;top:517.18px;font-size:22px;color:#252423;font-weight:normal;font-style:italic;font-family:'Liberation Sans', sans-serif;letter-spacing:0.3px;">23.05.2001</div>
<div class="t" style="left:1058.5px;width:1000px;text-align:right;top:517.18px;font-size:22px;color:#252423;font-weight:normal;font-style:italic;font-family:'Liberation Sans', sans-serif;">90</div>
<div class="t" style="left:-384px;width:1000px;text-align:center;top:559.18px;font-size:22px;color:#605e5c;font-weight:normal;font-style:normal;font-family:'Liberation Sans', sans-serif;">5</div>
<div class="t" style="left:-542.5px;width:1000px;text-align:right;top:559.18px;font-size:22px;color:#252423;font-weight:normal;font-style:italic;font-family:'Liberation Sans', sans-serif;">5</div>
<div class="t" style="left:473px;top:559.04px;font-size:22.4px;color:#323130;font-weight:normal;font-style:normal;font-family:'Liberation Sans', sans-serif;">Travis</div>
<div class="t" style="left:101.5px;width:1000px;text-align:right;top:559.18px;font-size:22px;color:#252423;font-weight:normal;font-style:italic;font-family:'Liberation Sans', sans-serif;letter-spacing:0.3px;">19.12.2000</div>
<div class="t" style="left:1058.5px;width:1000px;text-align:right;top:559.18px;font-size:22px;color:#252423;font-weight:normal;font-style:italic;font-family:'Liberation Sans', sans-serif;">75</div>
<div class="t" style="left:-384px;width:1000px;text-align:center;top:601.18px;font-size:22px;color:#605e5c;font-weight:normal;font-style:normal;font-family:'Liberation Sans', sans-serif;">6</div>
<div class="t" style="left:-542.5px;width:1000px;text-align:right;top:601.18px;font-size:22px;color:#252423;font-weight:normal;font-style:italic;font-family:'Liberation Sans', sans-serif;">6</div>
<div class="t" style="left:473px;top:601.04px;font-size:22.4px;color:#323130;font-weight:normal;font-style:normal;font-family:'Liberation Sans', sans-serif;">Caleb</div>
<div class="t" style="left:101.5px;width:1000px;text-align:right;top:601.18px;font-size:22px;color:#252423;font-weight:normal;font-style:italic;font-family:'Liberation Sans', sans-serif;letter-spacing:0.3px;">02.03.2001</div>
<div class="t" style="left:1058.5px;width:1000px;text-align:right;top:601.18px;font-size:22px;color:#252423;font-weight:normal;font-style:italic;font-family:'Liberation Sans', sans-serif;">60</div>
<div class="t" style="left:-384px;width:1000px;text-align:center;top:643.18px;font-size:22px;color:#605e5c;font-weight:normal;font-style:normal;font-family:'Liberation Sans', sans-serif;">7</div>
<div class="t" style="left:-542.5px;width:1000px;text-align:right;top:643.18px;font-size:22px;color:#252423;font-weight:normal;font-style:italic;font-family:'Liberation Sans', sans-serif;">7</div>
<div class="t" style="left:473px;top:643.04px;font-size:22.4px;color:#323130;font-weight:normal;font-style:normal;font-family:'Liberation Sans', sans-serif;">Ava</div>
<div class="t" style="left:101.5px;width:1000px;text-align:right;top:643.18px;font-size:22px;color:#252423;font-weight:normal;font-style:italic;font-family:'Liberation Sans', sans-serif;letter-spacing:0.3px;">26.07.2000</div>
<div class="t" style="left:1058.5px;width:1000px;text-align:right;top:643.18px;font-size:22px;color:#252423;font-weight:normal;font-style:italic;font-family:'Liberation Sans', sans-serif;">70</div>
<div class="t" style="left:-384px;width:1000px;text-align:center;top:685.18px;font-size:22px;color:#605e5c;font-weight:normal;font-style:normal;font-family:'Liberation Sans', sans-serif;">8</div>
<div class="t" style="left:-542.5px;width:1000px;text-align:right;top:685.18px;font-size:22px;color:#252423;font-weight:normal;font-style:italic;font-family:'Liberation Sans', sans-serif;">8</div>
<div class="t" style="left:473px;top:685.04px;font-size:22.4px;color:#323130;font-weight:normal;font-style:normal;font-family:'Liberation Sans', sans-serif;">Nathan</div>
<div class="t" style="left:101.5px;width:1000px;text-align:right;top:685.18px;font-size:22px;color:#252423;font-weight:normal;font-style:italic;font-family:'Liberation Sans', sans-serif;letter-spacing:0.3px;">20.11.2001</div>
<div class="t" style="left:1058.5px;width:1000px;text-align:right;top:685.18px;font-size:22px;color:#252423;font-weight:normal;font-style:italic;font-family:'Liberation Sans', sans-serif;">55</div>
<div class="t" style="left:-384px;width:1000px;text-align:center;top:727.18px;font-size:22px;color:#605e5c;font-weight:normal;font-style:normal;font-family:'Liberation Sans', sans-serif;">9</div>
<div class="t" style="left:-542.5px;width:1000px;text-align:right;top:727.18px;font-size:22px;color:#252423;font-weight:normal;font-style:italic;font-family:'Liberation Sans', sans-serif;">9</div>
<div class="t" style="left:473px;top:727.04px;font-size:22.4px;color:#323130;font-weight:normal;font-style:normal;font-family:'Liberation Sans', sans-serif;">Cooper</div>
<div class="t" style="left:101.5px;width:1000px;text-align:right;top:727.18px;font-size:22px;color:#252423;font-weight:normal;font-style:italic;font-family:'Liberation Sans', sans-serif;letter-spacing:0.3px;">08.06.2000</div>
<div class="t" style="left:1058.5px;width:1000px;text-align:right;top:727.18px;font-size:22px;color:#252423;font-weight:normal;font-style:italic;font-family:'Liberation Sans', sans-serif;">65</div>
<div class="t" style="left:-384px;width:1000px;text-align:center;top:769.18px;font-size:22px;color:#605e5c;font-weight:normal;font-style:normal;font-family:'Liberation Sans', sans-serif;">10</div>
<div class="t" style="left:-542.5px;width:1000px;text-align:right;top:769.18px;font-size:22px;color:#252423;font-weight:normal;font-style:italic;font-family:'Liberation Sans', sans-serif;">10</div>
<div class="t" style="left:473px;top:769.04px;font-size:22.4px;color:#323130;font-weight:normal;font-style:normal;font-family:'Liberation Sans', sans-serif;">Murphy</div>
<div class="t" style="left:101.5px;width:1000px;text-align:right;top:769.18px;font-size:22px;color:#252423;font-weight:normal;font-style:italic;font-family:'Liberation Sans', sans-serif;letter-spacing:0.3px;">01.12.2001</div>
<div class="t" style="left:1058.5px;width:1000px;text-align:right;top:769.18px;font-size:22px;color:#252423;font-weight:normal;font-style:italic;font-family:'Liberation Sans', sans-serif;">85</div>
<div class="r" style="left:1062px;top:356px;width:678px;height:670px;background:#fff;border:2px solid #c8c6c4;box-sizing:border-box;box-shadow:3px 3px 4px rgba(0,0,0,0.18)"></div>
<div class="r" style="left:1708px;top:324px;width:32px;height:32px;background:#ffffff;border:2px solid #a19f9d;box-sizing:border-box"></div>
<svg class="r" style="left:1718px;top:336px" width="12" height="6" viewBox="0 0 12 6"><path d="M0 0H12L6.0 6Z" fill="#605e5c"/></svg>
<svg class="r" style="left:1075px;top:374px" width="30" height="32" viewBox="0 0 30 32"><path d="M1.2 14L5.8 0.8H7.8L12.4 14" fill="none" stroke="#4a78b5" stroke-width="2.3"/><path d="M3.5 9.5H10" stroke="#4a78b5" stroke-width="2"/><path d="M1 17H11L1 29H11" fill="none" stroke="#7b4ba8" stroke-width="2.2"/><path d="M22 0V29" stroke="#707070" stroke-width="2.2"/><path d="M17 22.5L22 30L27 22.5" fill="none" stroke="#707070" stroke-width="2.4"/></svg>
<div class="t" style="left:1124px;top:389.96px;font-size:23.5px;color:#2b2a29;font-weight:normal;font-style:normal;font-family:'Liberation Sans', sans-serif;">Sort Ascending</div>
<svg class="r" style="left:1075px;top:422px" width="30" height="32" viewBox="0 0 30 32"><path d="M1 1H11L1 13H11" fill="none" stroke="#7b4ba8" stroke-width="2.2"/><path d="M1.2 30L5.8 16.8H7.8L12.4 30" fill="none" stroke="#4a78b5" stroke-width="2.3"/><path d="M3.5 25.5H10" stroke="#4a78b5" stroke-width="2"/><path d="M22 0V29" stroke="#707070" stroke-width="2.2"/><path d="M17 22.5L22 30L27 22.5" fill="none" stroke="#707070" stroke-width="2.4"/></svg>
<div class="t" style="left:1124px;top:438.16px;font-size:23.5px;color:#2b2a29;font-weight:normal;font-style:normal;font-family:'Liberation Sans', sans-serif;">Sort Descending</div>
<div class="t" style="left:1124px;top:486.16px;font-size:23.5px;color:#b3b0ad;font-weight:normal;font-style:normal;font-family:'Liberation Sans', sans-serif;">Clear Sort</div>
<div class="r" style="left:1124px;top:514px;width:594px;height:2px;background:#e1dfdd;"></div>
<svg class="r" style="left:1072px;top:524px" width="34" height="36" viewBox="0 0 34 36"><path d="M2 2H24V5.5L17 13.5H10L3 5.5Z" fill="#a9a8aa"/><rect x="10.2" y="13" width="2" height="11" fill="#a9a8aa"/><rect x="10.2" y="22" width="5.8" height="2" fill="#a9a8aa"/><path d="M15.5 17L31.5 31.5M29.5 17.5L15 32" stroke="#aaa9ab" stroke-width="1.9"/></svg>
<div class="t" style="left:1124px;top:539.66px;font-size:23.5px;color:#b3b0ad;font-weight:normal;font-style:normal;font-family:'Liberation Sans', sans-serif;">Clear Filter</div>
<div class="t" style="left:1124px;top:588.16px;font-size:23.5px;color:#2b2a29;font-weight:normal;font-style:normal;font-family:'Liberation Sans', sans-serif;">Remove Empty</div>
<div class="t" style="left:1124px;top:635.66px;font-size:23.5px;color:#2b2a29;font-weight:normal;font-style:normal;font-family:'Liberation Sans', sans-serif;">Text Filters</div>
<svg class="r" style="left:1711px;top:629px" width="8" height="12" viewBox="0 0 8 12"><path d="M0 0L7 6L0 12Z" fill="#605e5c"/></svg>
<div class="r" style="left:1124px;top:664px;width:594px;height:2px;background:#e1dfdd;"></div>
<div class="r" style="left:1124px;top:680px;width:594px;height:44px;background:#ffffff;border:2px solid #6e6e6e;box-sizing:border-box"></div>
<div class="t" style="left:1135px;top:705.16px;font-size:23.5px;color:#8a8886;font-weight:normal;font-style:italic;font-family:'Liberation Sans', sans-serif;">Search</div>
<div class="r" style="left:1124px;top:736px;width:594px;height:204px;background:#ffffff;border:2px solid #e1e1e6;box-sizing:border-box"></div>
<svg class="r" style="left:1146px;top:746px" width="24" height="24" viewBox="0 0 24 24"><rect x="0" y="0" width="24" height="24" rx="2" fill="#387563"/><path d="M5 12L10 17L19 7" fill="none" stroke="#fff" stroke-width="2.6"/></svg>
<div class="t" style="left:1184px;top:759.43px;font-size:23.3px;color:#2b2a29;font-weight:normal;font-style:normal;font-family:'Liberation Sans', sans-serif;">(Select All)</div>
<svg class="r" style="left:1146px;top:786px" width="24" height="24" viewBox="0 0 24 24"><rect x="0" y="0" width="24" height="24" rx="2" fill="#387563"/><path d="M5 12L10 17L19 7" fill="none" stroke="#fff" stroke-width="2.6"/></svg>
<div class="t" style="left:1184px;top:800.23px;font-size:23.3px;color:#2b2a29;font-weight:normal;font-style:normal;font-family:'Liberation Sans', sans-serif;">female</div>
<svg class="r" style="left:1146px;top:826px" width="24" height="24" viewBox="0 0 24 24"><rect x="0" y="0" width="24" height="24" rx="2" fill="#387563"/><path d="M5 12L10 17L19 7" fill="none" stroke="#fff" stroke-width="2.6"/></svg>
<div class="t" style="left:1184px;top:840.03px;font-size:23.3px;color:#2b2a29;font-weight:normal;font-style:normal;font-family:'Liberation Sans', sans-serif;">male</div>
<div class="r" style="left:1458px;top:960px;width:120px;height:44px;background:#387563;"></div>
<div class="t" style="left:1018px;width:1000px;text-align:center;top:981.94px;font-size:19.8px;color:#ffffff;font-weight:normal;font-style:normal;font-family:'Liberation Sans', sans-serif;">OK</div>
<div class="r" style="left:1598px;top:960px;width:120px;height:44px;background:#ffffff;border:2px solid #7a7a7a;box-sizing:border-box"></div>
<div class="t" style="left:1158px;width:1000px;text-align:center;top:982.04px;font-size:19.5px;color:#252423;font-weight:normal;font-style:normal;font-family:'Liberation Sans', sans-serif;">Cancel</div>
<div class="r" style="left:1738px;top:614px;width:354px;height:420px;background:#fff;border:2px solid #c8c6c4;box-sizing:border-box;box-shadow:3px 3px 4px rgba(0,0,0,0.18)"></div>
<div class="r" style="left:1740px;top:626px;width:350px;height:48px;background:#e8e8e8;"></div>
<div class="t" style="left:1799px;top:648.66px;font-size:23.5px;color:#2b2a29;font-weight:normal;font-style:normal;font-family:'Liberation Sans', sans-serif;">Equals...</div>
<div class="t" style="left:1799px;top:695.96px;font-size:23.5px;color:#2b2a29;font-weight:normal;font-style:normal;font-family:'Liberation Sans', sans-serif;">Does Not Equal...</div>
<div class="t" style="left:1799px;top:749.66px;font-size:23.5px;color:#2b2a29;font-weight:normal;font-style:normal;font-family:'Liberation Sans', sans-serif;">Begins With...</div>
<div class="t" style="left:1799px;top:797.36px;font-size:23.5px;color:#2b2a29;font-weight:normal;font-style:normal;font-family:'Liberation Sans', sans-serif;">Does Not Begin With...</div>
<div class="t" style="left:1799px;top:844.66px;font-size:23.5px;color:#2b2a29;font-weight:normal;font-style:normal;font-family:'Liberation Sans', sans-serif;">Ends With...</div>
<div class="t" style="left:1799px;top:892.66px;font-size:23.5px;color:#2b2a29;font-weight:normal;font-style:normal;font-family:'Liberation Sans', sans-serif;">Does Not End With...</div>
<div class="t" style="left:1799px;top:947.66px;font-size:23.5px;color:#2b2a29;font-weight:normal;font-style:normal;font-family:'Liberation Sans', sans-serif;">Contains...</div>
<div class="t" style="left:1799px;top:996.16px;font-size:23.5px;color:#2b2a29;font-weight:normal;font-style:normal;font-family:'Liberation Sans', sans-serif;">Does Not Contain...</div>
<div class="r" style="left:1800px;top:724px;width:270px;height:2px;background:#e1dfdd;"></div>
<div class="r" style="left:1800px;top:922px;width:270px;height:2px;background:#e1dfdd;"></div>
<svg class="r" style="left:1819px;top:656px" width="28" height="42" viewBox="0 0 28 42"><path d="M2 2V36L10 28L15 38.5L19.5 36.5L15 26.5H25Z" fill="#fff" stroke="#000" stroke-width="1.7" stroke-linejoin="miter"/></svg>
</body></html>
